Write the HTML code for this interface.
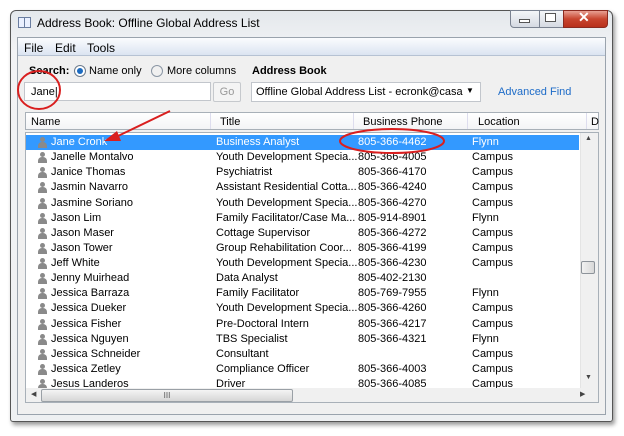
<!DOCTYPE html>
<html><head><style>
*{margin:0;padding:0;box-sizing:border-box}
body{width:624px;height:436px;background:#fff;position:relative;overflow:hidden;font-family:"Liberation Sans",sans-serif;font-size:11px;color:#000}
.a{position:absolute}
.win{left:10px;top:10px;width:603px;height:412px;border:1px solid #555;border-radius:6px 6px 3px 3px;background:linear-gradient(#e4e8ec,#f2f3f5 40px,#eef0f2);box-shadow:2px 3px 4px rgba(0,0,0,.4)}
.client{left:17px;top:37px;width:589px;height:378px;border:1px solid #9aa3ad;background:#f0f0f0}
.menu{left:18px;top:38px;width:587px;height:18px;background:linear-gradient(#fbfcfe,#dbe4f1);border-bottom:1px solid #b6c2d3}
.row{position:absolute;left:0;height:15px;width:560px;white-space:nowrap}
.row span{position:absolute;top:1px}
.ic{position:absolute;left:11px;top:2px;width:10px;height:11px}
.ic:before{content:"";position:absolute;left:3px;top:0;width:5px;height:5px;border-radius:50%;background:#8a8a8a}
.ic:after{content:"";position:absolute;left:1px;top:5px;width:9px;height:6px;border-radius:4px 4px 0 0;background:#8a8a8a}
</style></head><body>
<div class="a win"></div>
<div class="a" style="left:18px;top:17px;width:13px;height:11px;border:1px solid #6a7da0;background:#eaf0ff"></div>
<div class="a" style="left:24px;top:17px;width:1px;height:11px;background:#6a7da0"></div>
<div class="a" style="left:37px;top:16px;font-size:12px">Address Book: Offline Global Address List</div>
<div class="a" style="left:510px;top:10px;width:30px;height:18px;border:1px solid #7a8291;border-radius:0 0 0 4px;background:linear-gradient(#f4f6f9,#d5dae2)"></div>
<div class="a" style="left:519px;top:19px;width:11px;height:4px;border:1px solid #555;background:#fff"></div>
<div class="a" style="left:539px;top:10px;width:25px;height:18px;border:1px solid #7a8291;background:linear-gradient(#f4f6f9,#d5dae2)"></div>
<div class="a" style="left:545px;top:13px;width:11px;height:9px;border:1px solid #555;background:#fff"></div>
<div class="a" style="left:563px;top:10px;width:45px;height:18px;border:1px solid #8a2a20;border-radius:0 0 4px 0;background:linear-gradient(#e8a093,#c8452f 50%,#b8301c)"></div>
<div class="a" style="left:578px;top:9px;color:#fff;font-weight:bold;font-size:14px">✕</div>
<div class="a client"></div>
<div class="a menu"></div>
<div class="a" style="left:24px;top:41px;font-size:12px">File</div>
<div class="a" style="left:55px;top:41px;font-size:12px">Edit</div>
<div class="a" style="left:87px;top:41px;font-size:12px">Tools</div>
<div class="a" style="left:29px;top:65px;font-weight:bold">Search:</div>
<div class="a" style="left:74px;top:65px;width:12px;height:12px;border:1px solid #6b7a8c;border-radius:50%;background:#fff"></div>
<div class="a" style="left:77px;top:68px;width:6px;height:6px;border-radius:50%;background:#1c6bc0"></div>
<div class="a" style="left:89px;top:65px">Name only</div>
<div class="a" style="left:151px;top:65px;width:12px;height:12px;border:1px solid #8a96a4;border-radius:50%;background:#f0f0f0"></div>
<div class="a" style="left:167px;top:65px">More columns</div>
<div class="a" style="left:252px;top:65px;font-weight:bold">Address Book</div>
<div class="a" style="left:24px;top:82px;width:187px;height:19px;border:1px solid #c2c6cc;background:#fff"></div>
<div class="a" style="left:31px;top:86px">Jane|</div>
<div class="a" style="left:213px;top:82px;width:28px;height:20px;border:1px solid #c6c9cd;border-radius:2px;background:#f4f4f4;color:#999;text-align:center;line-height:18px">Go</div>
<div class="a" style="left:251px;top:82px;width:230px;height:20px;border:1px solid #c2c6cc;background:#fff"></div>
<div class="a" style="left:256px;top:86px;white-space:nowrap">Offline Global Address List - ecronk@casa</div>
<div class="a" style="left:466px;top:86px;font-size:8px">▼</div>
<div class="a" style="left:498px;top:86px;color:#1e6cc8">Advanced Find</div>
<div class="a" style="left:25px;top:112px;width:574px;height:18px;border:1px solid #a8b0b8;background:linear-gradient(#fff,#f3f4f6)"></div>
<div class="a" style="left:210px;top:113px;width:1px;height:16px;background:#dde"></div>
<div class="a" style="left:353px;top:113px;width:1px;height:16px;background:#dde"></div>
<div class="a" style="left:467px;top:113px;width:1px;height:16px;background:#dde"></div>
<div class="a" style="left:586px;top:113px;width:1px;height:16px;background:#dde"></div>
<div class="a" style="left:31px;top:116px">Name</div>
<div class="a" style="left:220px;top:116px">Title</div>
<div class="a" style="left:363px;top:116px">Business Phone</div>
<div class="a" style="left:478px;top:116px">Location</div>
<div class="a" style="left:591px;top:116px">D</div>
<div class="a" style="left:25px;top:132px;width:574px;height:271px;border:1px solid #a8b0b8;background:#fff;overflow:hidden">
<div class="a" style="left:0;top:2px;width:553px;height:15px;background:#3399ff"></div>
<div style="position:absolute;left:0;top:2px;width:560px">
<div class="row" style="top:0;color:#fff"><i class="ic"></i><span style="left:25px">Jane Cronk</span><span style="left:190px">Business Analyst</span><span style="left:332px">805-366-4462</span><span style="left:446px">Flynn</span></div>
<div class="row" style="top:15.1px"><i class="ic"></i><span style="left:25px">Janelle Montalvo</span><span style="left:190px">Youth Development Specia...</span><span style="left:332px">805-366-4005</span><span style="left:446px">Campus</span></div>
<div class="row" style="top:30.2px"><i class="ic"></i><span style="left:25px">Janice Thomas</span><span style="left:190px">Psychiatrist</span><span style="left:332px">805-366-4170</span><span style="left:446px">Campus</span></div>
<div class="row" style="top:45.4px"><i class="ic"></i><span style="left:25px">Jasmin Navarro</span><span style="left:190px">Assistant Residential Cotta...</span><span style="left:332px">805-366-4240</span><span style="left:446px">Campus</span></div>
<div class="row" style="top:60.5px"><i class="ic"></i><span style="left:25px">Jasmine Soriano</span><span style="left:190px">Youth Development Specia...</span><span style="left:332px">805-366-4270</span><span style="left:446px">Campus</span></div>
<div class="row" style="top:75.6px"><i class="ic"></i><span style="left:25px">Jason Lim</span><span style="left:190px">Family Facilitator/Case Ma...</span><span style="left:332px">805-914-8901</span><span style="left:446px">Flynn</span></div>
<div class="row" style="top:90.7px"><i class="ic"></i><span style="left:25px">Jason Maser</span><span style="left:190px">Cottage Supervisor</span><span style="left:332px">805-366-4272</span><span style="left:446px">Campus</span></div>
<div class="row" style="top:105.9px"><i class="ic"></i><span style="left:25px">Jason Tower</span><span style="left:190px">Group Rehabilitation Coor...</span><span style="left:332px">805-366-4199</span><span style="left:446px">Campus</span></div>
<div class="row" style="top:121px"><i class="ic"></i><span style="left:25px">Jeff White</span><span style="left:190px">Youth Development Specia...</span><span style="left:332px">805-366-4230</span><span style="left:446px">Campus</span></div>
<div class="row" style="top:136.1px"><i class="ic"></i><span style="left:25px">Jenny Muirhead</span><span style="left:190px">Data Analyst</span><span style="left:332px">805-402-2130</span><span style="left:446px"></span></div>
<div class="row" style="top:151.2px"><i class="ic"></i><span style="left:25px">Jessica Barraza</span><span style="left:190px">Family Facilitator</span><span style="left:332px">805-769-7955</span><span style="left:446px">Flynn</span></div>
<div class="row" style="top:166.4px"><i class="ic"></i><span style="left:25px">Jessica Dueker</span><span style="left:190px">Youth Development Specia...</span><span style="left:332px">805-366-4260</span><span style="left:446px">Campus</span></div>
<div class="row" style="top:181.5px"><i class="ic"></i><span style="left:25px">Jessica Fisher</span><span style="left:190px">Pre-Doctoral Intern</span><span style="left:332px">805-366-4217</span><span style="left:446px">Campus</span></div>
<div class="row" style="top:196.6px"><i class="ic"></i><span style="left:25px">Jessica Nguyen</span><span style="left:190px">TBS Specialist</span><span style="left:332px">805-366-4321</span><span style="left:446px">Flynn</span></div>
<div class="row" style="top:211.7px"><i class="ic"></i><span style="left:25px">Jessica Schneider</span><span style="left:190px">Consultant</span><span style="left:332px"></span><span style="left:446px">Campus</span></div>
<div class="row" style="top:226.9px"><i class="ic"></i><span style="left:25px">Jessica Zetley</span><span style="left:190px">Compliance Officer</span><span style="left:332px">805-366-4003</span><span style="left:446px">Campus</span></div>
<div class="row" style="top:242px"><i class="ic"></i><span style="left:25px">Jesus Landeros</span><span style="left:190px">Driver</span><span style="left:332px">805-366-4085</span><span style="left:446px">Campus</span></div>
</div>
<div class="a" style="left:554px;top:0;width:18px;height:255px;background:#f0f0f0;border-left:1px solid #e4e4e4"></div>
<div class="a" style="left:559px;top:2px;font-size:7px;color:#444">▲</div>
<div class="a" style="left:559px;top:241px;font-size:7px;color:#444">▼</div>
<div class="a" style="left:555px;top:128px;width:14px;height:13px;border:1px solid #8d939a;border-radius:2px;background:linear-gradient(90deg,#f2f2f2,#d8d8d8)"></div>
<div class="a" style="left:0;top:255px;width:572px;height:15px;background:#f0f0f0"></div>
<div class="a" style="left:5px;top:257px;font-size:7px;color:#444">◀</div>
<div class="a" style="left:554px;top:257px;font-size:7px;color:#444">▶</div>
<div class="a" style="left:15px;top:256px;width:252px;height:13px;border:1px solid #9aa0a6;border-radius:2px;background:linear-gradient(#f4f4f4,#d6d6d6);text-align:center;font-size:8px;line-height:11px;color:#555">III</div>
</div>
<svg class="a" style="left:0;top:0" width="624" height="436">
<ellipse cx="39" cy="90" rx="21" ry="19" fill="none" stroke="#d91f1f" stroke-width="2"/>
<ellipse cx="392" cy="141" rx="52" ry="12" fill="none" stroke="#d91f1f" stroke-width="2"/>
<line x1="170" y1="111" x2="118" y2="136" stroke="#d91f1f" stroke-width="2"/>
<polygon points="104,141 117,131 121,141" fill="#d91f1f"/>
</svg>
</body></html>
